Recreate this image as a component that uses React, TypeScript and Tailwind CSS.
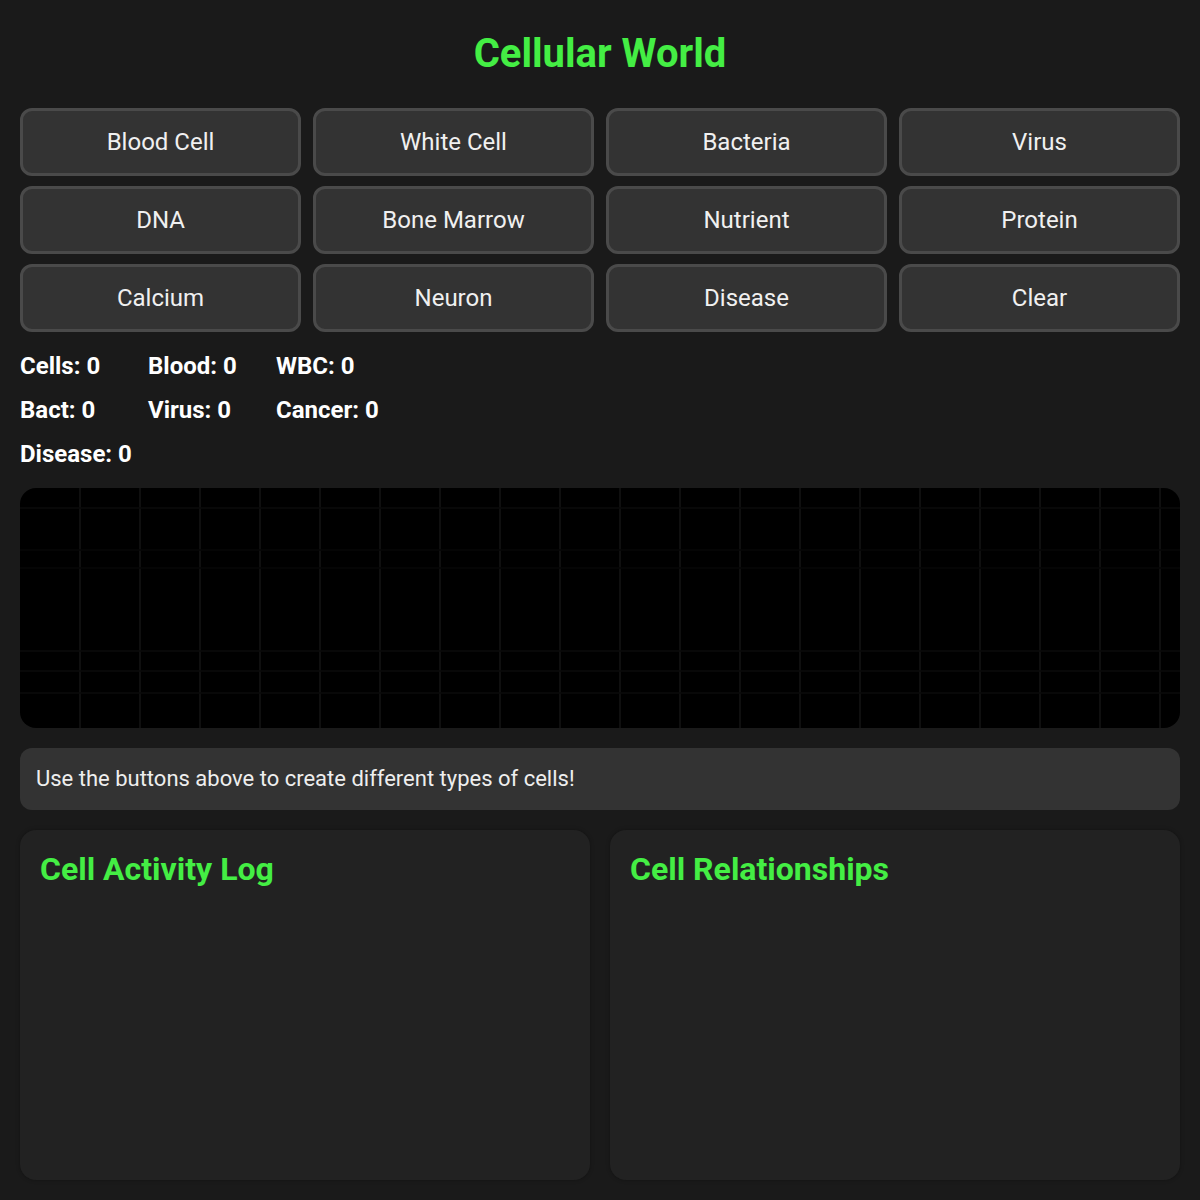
import React from "react";

const buttons = [
  "Blood Cell", "White Cell", "Bacteria", "Virus",
  "DNA", "Bone Marrow", "Nutrient", "Protein",
  "Calcium", "Neuron", "Disease", "Clear",
];

const stats = [
  "Cells: 0", "Blood: 0", "WBC: 0",
  "Bact: 0", "Virus: 0", "Cancer: 0",
  "Disease: 0",
];

function Grid() {
  const vx: number[] = [];
  for (let x = 60; x < 1160; x += 60) vx.push(x);
  const hy = [20, 62, 80, 163, 183, 205];
  return (
    <svg className="absolute inset-0 h-full w-full" viewBox="0 0 1160 240" preserveAspectRatio="none">
      {vx.map((x) => (
        <line key={"v" + x} x1={x} y1={0} x2={x} y2={240} stroke="#0f0f0f" strokeWidth={2} />
      ))}
      {hy.map((y, i) => (
        <line key={"h" + y} x1={0} y1={y} x2={1160} y2={y} stroke={i === 1 || i === 2 ? "#070707" : "#0b0b0b"} strokeWidth={1.5} />
      ))}
    </svg>
  );
}

export default function App() {
  return (
    <div className="min-h-[1200px] w-full bg-[#1a1a1a] p-5 text-white" style={{ fontFamily: "Roboto, 'Noto Sans', sans-serif" }}>
      <h1 className="mt-[10px] mb-[30px] text-center text-[40px] font-bold leading-[48px] text-[#44ee44]">Cellular World</h1>
      <div className="grid grid-cols-4 gap-x-3 gap-y-[10px]">
        {buttons.map((b) => (
          <button
            key={b}
            className="flex h-[68px] items-center justify-center rounded-[12px] border-[3px] border-[#4a4a4a] bg-[#333333] text-[24px] leading-[28px] text-[#f0f0f0]"
          >
            {b}
          </button>
        ))}
      </div>
      <div className="mt-5 grid grid-cols-[repeat(3,128px)] gap-y-4">
        {stats.map((s) => (
          <div key={s} className="text-[24px] font-bold leading-[28px] text-white">{s}</div>
        ))}
      </div>
      <div className="relative mt-5 h-[240px] overflow-hidden rounded-[16px] bg-black">
        <Grid />
      </div>
      <div className="mt-5 rounded-[12px] bg-[#333333] px-4 py-4 text-[22px] leading-[30px] text-[#eeeeee]">
        Use the buttons above to create different types of cells!
      </div>
      <div className="mt-5 grid grid-cols-2 gap-5">
        <div className="h-[350px] rounded-[16px] bg-[#222222] p-5 shadow-[0_0_4px_rgba(0,0,0,0.3)]">
          <h2 className="text-[32px] font-bold leading-[38px] text-[#44ee44]">Cell Activity Log</h2>
        </div>
        <div className="h-[350px] rounded-[16px] bg-[#222222] p-5 shadow-[0_0_4px_rgba(0,0,0,0.3)]">
          <h2 className="text-[32px] font-bold leading-[38px] text-[#44ee44]">Cell Relationships</h2>
        </div>
      </div>
    </div>
  );
}
